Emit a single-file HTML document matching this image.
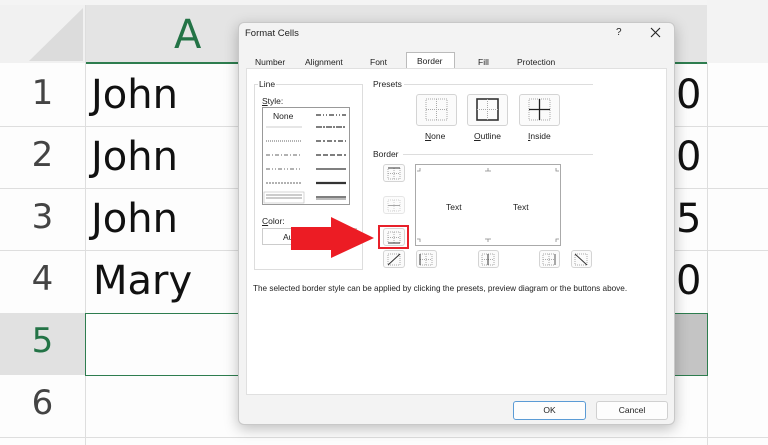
<!DOCTYPE html>
<html><head><meta charset="utf-8"><style>
*{margin:0;padding:0;box-sizing:border-box}
body{width:768px;height:445px;position:relative;overflow:hidden;background:#fdfdfd;font-family:"Liberation Sans",sans-serif}
.a{position:absolute}
.big{font-family:"DejaVu Sans","Liberation Sans",sans-serif;font-size:40px;color:#111}
.rn{font-family:"DejaVu Sans",sans-serif;font-size:34px;color:#444;width:85px;text-align:center}
.hl{height:1px;background:#dedede;left:0;width:768px}
.vl{width:1px;background:#dedede}
.t{font-size:8.5px;color:#222}
.btn{position:absolute;background:#fbfbfb;border:1px solid #d4d4d4;border-radius:3px}
</style></head><body>
<div class="a" style="left:0;top:0;width:768px;height:5px;background:#f4f4f4"></div>
<div class="a" style="left:85px;top:5px;width:622px;height:58px;background:#e4e4e4"></div>
<div class="a" style="left:707px;top:0;width:61px;height:63px;background:#f3f3f3"></div>
<div class="a" style="left:0;top:5px;width:85px;height:58px;background:#f1f1f1"></div>
<svg class="a" style="left:28px;top:8px" width="56" height="54"><polygon points="55,0 55,53 1,53" fill="#dcdcdc"/></svg>
<div class="a" style="left:85px;top:62px;width:622px;height:2px;background:#2e7d4f"></div>
<div class="a" style="left:174px;top:12px;font-family:'DejaVu Sans',sans-serif;font-size:40px;color:#237346">A</div>
<div class="a hl" style="top:126px"></div><div class="a hl" style="top:188px"></div>
<div class="a hl" style="top:250px"></div><div class="a hl" style="top:437px"></div>
<div class="a vl" style="left:85px;top:5px;height:440px"></div>
<div class="a vl" style="left:707px;top:63px;height:382px"></div>
<div class="a" style="left:0;top:313px;width:85px;height:62px;background:#e1e1e1"></div>
<div class="a rn" style="top:73px">1</div><div class="a rn" style="top:135px">2</div>
<div class="a rn" style="top:197px">3</div><div class="a rn" style="top:259px">4</div>
<div class="a rn" style="top:321px;color:#237346">5</div><div class="a rn" style="top:383px">6</div>
<div class="a big" style="left:91px;top:72px">John</div>
<div class="a big" style="left:91px;top:134px">John</div>
<div class="a big" style="left:91px;top:196px">John</div>
<div class="a big" style="left:93px;top:258px">Mary</div>
<div class="a big" style="left:676px;top:72px">0</div>
<div class="a big" style="left:676px;top:134px">0</div>
<div class="a big" style="left:676px;top:196px">5</div>
<div class="a big" style="left:676px;top:258px">0</div>
<div class="a" style="left:675px;top:313px;width:32px;height:62px;background:#c4c4c4"></div>
<div class="a" style="left:85px;top:313px;width:623px;height:63px;border:1px solid #2e7d4f"></div>
<!-- dialog -->
<div class="a" style="left:238px;top:22px;width:437px;height:403px;background:#f3f3f3;border:1px solid #c8c8c8;border-radius:6px;box-shadow:0 4px 14px rgba(0,0,0,.25)"></div>
<div class="a t" style="left:245px;top:28px;font-size:9.5px">Format Cells</div>
<div class="a t" style="left:616px;top:27px;font-size:10px">?</div>
<svg class="a" style="left:650px;top:27px" width="11" height="11"><path d="M1 1L10 10M10 1L1 10" stroke="#222" stroke-width="1.1"/></svg>
<div class="a t" style="left:255px;top:57px">Number</div>
<div class="a t" style="left:305px;top:57px">Alignment</div>
<div class="a t" style="left:370px;top:57px">Font</div>
<div class="a" style="left:406px;top:52px;width:49px;height:17px;background:#fff;border:1px solid #bbb;border-bottom:none"></div>
<div class="a t" style="left:417px;top:56px">Border</div>
<div class="a t" style="left:478px;top:57px">Fill</div>
<div class="a t" style="left:517px;top:57px">Protection</div>
<div class="a" style="left:246px;top:68px;width:421px;height:327px;background:#fff;border:1px solid #e0e0e0"></div>
<div class="a" style="left:254px;top:84px;width:109px;height:186px;border:1px solid #ddd"></div>
<div class="a t" style="left:258px;top:79px;background:#fff;padding:0 1px">Line</div>
<div class="a t" style="left:262px;top:96px"><u>S</u>tyle:</div>
<div class="a" style="left:262px;top:107px;width:88px;height:98px;border:1px solid #999;background:#fff"></div>
<div class="a t" style="left:273px;top:111px">None</div>
<svg class="a" style="left:262px;top:107px" width="88" height="98" stroke="#333">
<line x1="4" y1="20" x2="40" y2="20" stroke="#999" stroke-width=".6"/>
<line x1="4" y1="34" x2="40" y2="34" stroke-dasharray="1 1" stroke-width=".7"/>
<line x1="4" y1="48" x2="40" y2="48" stroke-dasharray="4 2 1 2" stroke-width=".7"/>
<line x1="4" y1="62" x2="40" y2="62" stroke-dasharray="4 2 1 2 1 2" stroke-width=".7"/>
<line x1="4" y1="76" x2="40" y2="76" stroke-dasharray="2 1" stroke-width=".7"/>
<rect x="2" y="85" width="40" height="11" fill="none" stroke="#bbb" stroke-width=".6"/>
<line x1="4" y1="88" x2="40" y2="88" stroke-width=".6"/><line x1="4" y1="91" x2="40" y2="91" stroke-width=".6"/>
<line x1="54" y1="8" x2="84" y2="8" stroke-dasharray="5 2 1 2 1 2" stroke-width="1.3"/>
<line x1="54" y1="20" x2="84" y2="20" stroke-dasharray="6 1 2 1" stroke-width="1.3"/>
<line x1="54" y1="34" x2="84" y2="34" stroke-dasharray="5 2 2 2" stroke-width="1.3"/>
<line x1="54" y1="48" x2="84" y2="48" stroke-dasharray="5 2" stroke-width="1.3"/>
<line x1="54" y1="62" x2="84" y2="62" stroke-width="1.3"/>
<line x1="54" y1="76" x2="84" y2="76" stroke-width="2.2"/>
<line x1="54" y1="90" x2="84" y2="90" stroke-width="1.2"/><line x1="54" y1="92" x2="84" y2="92" stroke-width="1" stroke="#777"/>
</svg>
<div class="a t" style="left:262px;top:216px"><u>C</u>olor:</div>
<div class="a" style="left:262px;top:228px;width:95px;height:17px;border:1px solid #ccc;background:#fff"></div>
<div class="a t" style="left:283px;top:232px">Au</div>
<div class="a t" style="left:373px;top:79px">Presets</div>
<div class="a" style="left:404px;top:84px;width:189px;height:1px;background:#ddd"></div>
<div class="btn" style="left:416px;top:94px;width:41px;height:32px"></div>
<div class="btn" style="left:467px;top:94px;width:41px;height:32px"></div>
<div class="btn" style="left:519px;top:94px;width:41px;height:32px"></div>
<svg class="a" style="left:425px;top:98px" width="24" height="24"><rect x="1" y="1" width="21" height="21" fill="none" stroke="#aaa" stroke-dasharray="1 1"/><line x1="11.5" y1="1" x2="11.5" y2="22" stroke="#aaa" stroke-dasharray="1 1"/><line x1="1" y1="11.5" x2="22" y2="11.5" stroke="#aaa" stroke-dasharray="1 1"/></svg>
<svg class="a" style="left:476px;top:98px" width="24" height="24"><rect x="1" y="1" width="21" height="21" fill="none" stroke="#333" stroke-width="1.6"/><line x1="11.5" y1="1" x2="11.5" y2="22" stroke="#aaa" stroke-dasharray="1 1"/><line x1="1" y1="11.5" x2="22" y2="11.5" stroke="#aaa" stroke-dasharray="1 1"/></svg>
<svg class="a" style="left:528px;top:98px" width="24" height="24"><rect x="1" y="1" width="21" height="21" fill="none" stroke="#aaa" stroke-dasharray="1 1"/><line x1="11.5" y1="1" x2="11.5" y2="22" stroke="#222" stroke-width="1.3"/><line x1="1" y1="11.5" x2="22" y2="11.5" stroke="#222" stroke-width="1.3"/></svg>
<div class="a t" style="left:425px;top:131px"><u>N</u>one</div>
<div class="a t" style="left:474px;top:131px"><u>O</u>utline</div>
<div class="a t" style="left:528px;top:131px"><u>I</u>nside</div>
<div class="a t" style="left:373px;top:149px">Border</div>
<div class="a" style="left:403px;top:154px;width:190px;height:1px;background:#ddd"></div>
<div class="a" style="left:415px;top:164px;width:146px;height:82px;border:1px solid #aaa;background:#fff"></div>
<div class="a t" style="left:446px;top:202px">Text</div>
<div class="a t" style="left:513px;top:202px">Text</div>
<svg class="a" style="left:415px;top:164px" width="146" height="82" stroke="#888" stroke-width=".8" fill="none">
<path d="M5 4v3h-3M73 4v3M70 7h6M141 4v3h3M5 78v-3h-3M73 78v-3M70 75h6M141 78v-3h3"/></svg>
<svg width="0" height="0" style="position:absolute"><defs>
<g id="g"><rect x="4" y="4" width="12" height="11" fill="none" stroke="#aaa" stroke-dasharray="1 1"/><line x1="10" y1="4" x2="10" y2="15" stroke="#aaa" stroke-dasharray="1 1"/><line x1="4" y1="9.5" x2="16" y2="9.5" stroke="#aaa" stroke-dasharray="1 1"/></g></defs></svg>
<div class="btn" style="left:383px;top:164px;width:22px;height:18px"></div>
<svg class="a" style="left:384px;top:164px" width="20" height="18"><use href="#g"/><line x1="4" y1="4" x2="16" y2="4" stroke="#333"/></svg>
<div class="btn" style="left:383px;top:196px;width:22px;height:18px;opacity:.6"></div>
<svg class="a" style="left:384px;top:196px;opacity:.5" width="20" height="18"><use href="#g"/><line x1="4" y1="9.5" x2="16" y2="9.5" stroke="#555"/></svg>
<div class="btn" style="left:383px;top:228px;width:22px;height:18px"></div>
<svg class="a" style="left:384px;top:228px" width="20" height="18"><use href="#g"/><line x1="4" y1="15" x2="16" y2="15" stroke="#333"/></svg>
<div class="a" style="left:378px;top:225px;width:31px;height:24px;border:2.5px solid #e8202a"></div>
<div class="btn" style="left:383px;top:250px;width:22px;height:18px"></div>
<svg class="a" style="left:384px;top:250px" width="20" height="18"><rect x="4" y="4" width="12" height="11" fill="none" stroke="#aaa" stroke-dasharray="1 1"/><line x1="4" y1="15" x2="16" y2="4" stroke="#333"/></svg>
<div class="btn" style="left:416px;top:250px;width:21px;height:18px"></div>
<svg class="a" style="left:416px;top:250px" width="20" height="18"><use href="#g"/><line x1="4" y1="4" x2="4" y2="15" stroke="#333"/></svg>
<div class="btn" style="left:478px;top:250px;width:21px;height:18px"></div>
<svg class="a" style="left:478px;top:250px" width="20" height="18"><use href="#g"/><line x1="10" y1="4" x2="10" y2="15" stroke="#333"/></svg>
<div class="btn" style="left:539px;top:250px;width:21px;height:18px"></div>
<svg class="a" style="left:539px;top:250px" width="20" height="18"><use href="#g"/><line x1="16" y1="4" x2="16" y2="15" stroke="#555"/></svg>
<div class="btn" style="left:571px;top:250px;width:21px;height:18px"></div>
<svg class="a" style="left:571px;top:250px" width="20" height="18"><rect x="4" y="4" width="12" height="11" fill="none" stroke="#aaa" stroke-dasharray="1 1"/><line x1="4" y1="4" x2="16" y2="15" stroke="#333"/></svg>
<div class="a t" style="left:253px;top:284px;font-size:8.2px">The selected border style can be applied by clicking the presets, preview diagram or the buttons above.</div>
<svg class="a" style="left:288px;top:215px" width="90" height="46"><polygon points="3,12 43,12 43,2 86,23 43,43 43,35 3,35" fill="#ec1c24"/></svg>
<div class="a" style="left:513px;top:401px;width:73px;height:19px;background:#fdfdfd;border:1px solid #5b9bd5;border-radius:3px;text-align:center;font-size:8.5px;line-height:17px;color:#222">OK</div>
<div class="a" style="left:596px;top:401px;width:72px;height:19px;background:#fdfdfd;border:1px solid #d0d0d0;border-radius:3px;text-align:center;font-size:8.5px;line-height:17px;color:#222">Cancel</div>
</body></html>
